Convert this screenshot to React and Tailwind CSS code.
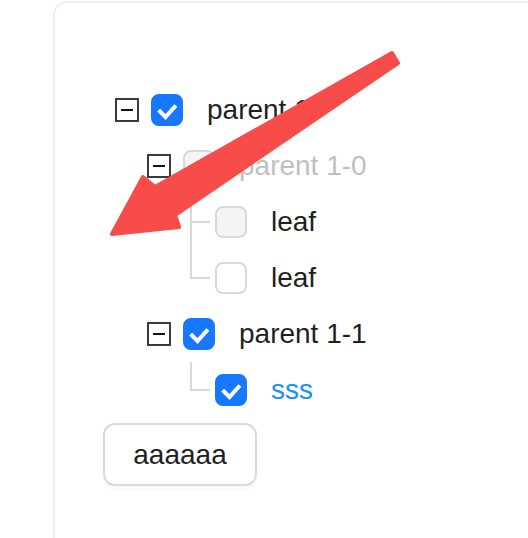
import React from "react";

const font = { fontFamily: '"Liberation Sans", Arial, sans-serif' };

function Switcher() {
  return (
    <span className="flex h-[24px] w-[24px] items-center justify-center border-2 border-[#3a3a3a] bg-white">
      <span className="h-[2px] w-[12px] bg-[#111]" />
    </span>
  );
}

function Check({ color = "#fff" }) {
  return (
    <svg width="32" height="32" viewBox="0 0 32 32" className="absolute left-[-2px] top-[-2px]">
      <path d="M9 17.5 L14.5 23 L23.5 13" fill="none" stroke={color} strokeWidth="4" strokeLinecap="square" />
    </svg>
  );
}

function Checkbox({ state }) {
  // state: checked | disabledChecked | disabled | empty
  if (state === "checked") {
    return (
      <span className="relative h-[32px] w-[32px] shrink-0 rounded-[8px] border-2 border-[#1677ff] bg-[#1677ff]">
        <Check />
      </span>
    );
  }
  if (state === "disabledChecked") {
    return (
      <span className="relative h-[32px] w-[32px] shrink-0 rounded-[8px] border-2 border-[#d9d9d9] bg-[#f5f5f5]">
        <Check color="rgba(0,0,0,0.25)" />
      </span>
    );
  }
  if (state === "disabled") {
    return <span className="h-[32px] w-[32px] shrink-0 rounded-[8px] border-2 border-[#d9d9d9] bg-[#f5f5f5]" />;
  }
  return <span className="h-[32px] w-[32px] shrink-0 rounded-[8px] border-2 border-[#d9d9d9] bg-white" />;
}

function LeafLine({ last }) {
  return (
    <span className="relative h-[56px] w-[36px] shrink-0">
      <span className={`absolute left-[11px] top-0 w-[2px] bg-[#d9d9d9] ${last ? "h-[29px]" : "h-[56px]"}`} />
      <span className="absolute left-[11px] top-[27px] h-[2px] w-[20px] bg-[#d9d9d9]" />
    </span>
  );
}

function Row({ level, leaf, last, box, title, color = "text-[#1f1f1f]" }) {
  const pad = ["pl-0", "pl-[32px]", "pl-[64px]"][level];
  return (
    <div className={`flex h-[56px] items-center ${pad}`}>
      {leaf ? (
        <LeafLine last={last} />
      ) : (
        <span className="flex w-[36px] shrink-0 items-center">
          <Switcher />
        </span>
      )}
      <Checkbox state={box} />
      <span className={`ml-[24px] whitespace-nowrap text-[28px] leading-[56px] ${color}`}>{title}</span>
    </div>
  );
}

export default function App() {
  return (
    <div className="relative h-[538px] w-[528px] overflow-hidden bg-white" style={font}>
      <div className="ml-[53px] mt-[1px] h-[600px] w-[520px] rounded-tl-[14px] border-2 border-[#f0f0f0] bg-white">
        <div className="pl-[60px] pt-[79px]">
          <Row level={0} box="checked" title="parent 1" />
          <Row level={1} box="disabledChecked" title="parent 1-0" color="text-[#bfbfbf]" />
          <Row level={2} leaf box="disabled" title="leaf" />
          <Row level={2} leaf last box="empty" title="leaf" />
          <Row level={1} box="checked" title="parent 1-1" />
          <Row level={2} leaf last box="checked" title="sss" color="text-[#1890ff]" />
        </div>
        <div className="ml-[48px] mt-[5px]">
          <button className="h-[63px] w-[154px] rounded-[12px] border-2 border-[#d9d9d9] bg-white text-[28px] text-[#1f1f1f] shadow-[0_4px_0_rgba(0,0,0,0.02)]">
            aaaaaa
          </button>
        </div>
      </div>

      {/* red annotation arrow */}
      <svg className="pointer-events-none absolute left-0 top-0" width="528" height="538" viewBox="0 0 528 538">
        <path
          d="M392 53 L398 63 L175 215 L179 227 L112 234 L143 177 L155 187 Z"
          fill="#f74c49"
          stroke="#f74c49"
          strokeWidth="4"
          strokeLinejoin="round"
        />
      </svg>
    </div>
  );
}
